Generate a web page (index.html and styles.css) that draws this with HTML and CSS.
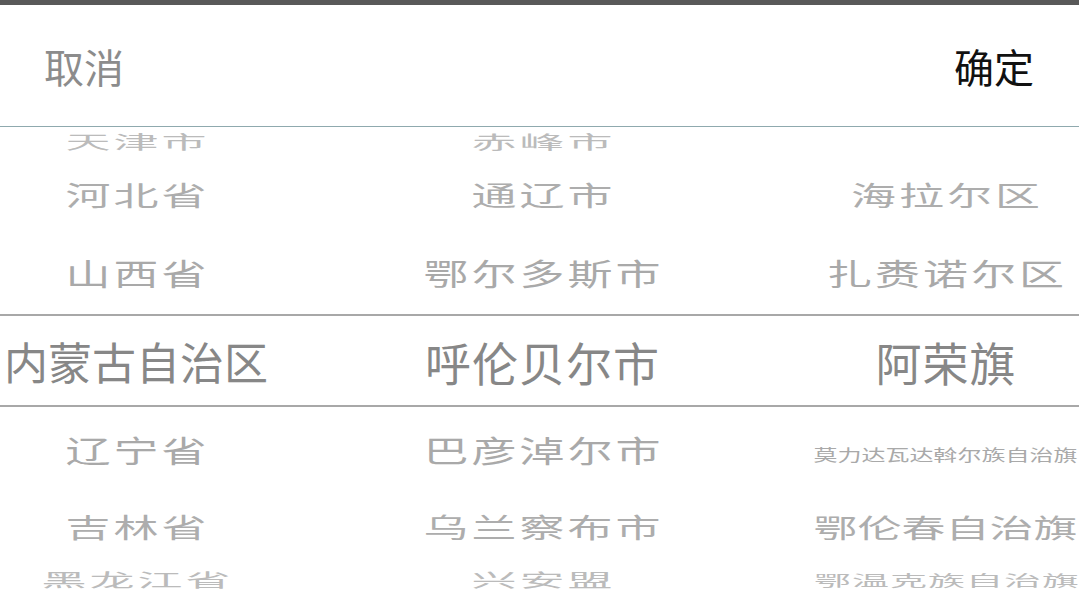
FILE: index.html
```html
<!DOCTYPE html>
<html lang="zh-CN">
  <head>
    <meta charset="UTF-8" />
    <meta name="viewport" content="width=device-width, initial-scale=1.0" />
    <title>选择地区</title>
    <link rel="stylesheet" href="styles.css">
  </head>
  <body>
    <div class="status-bar"></div>

    <div class="picker-header">
      <span class="btn-cancel">取消</span>
      <span class="btn-ok">确定</span>
    </div>

    <div class="picker">
      <div class="wheel">
        <div class="item far"><span>天津市</span></div>
        <div class="item mid"><span>河北省</span></div>
        <div class="item near"><span>山西省</span></div>
        <div class="item current"><span class="tight">内蒙古自治区</span></div>
        <div class="item near"><span>辽宁省</span></div>
        <div class="item mid"><span>吉林省</span></div>
        <div class="item far"><span>黑龙江省</span></div>
      </div>

      <div class="wheel">
        <div class="item far"><span>赤峰市</span></div>
        <div class="item mid"><span>通辽市</span></div>
        <div class="item near"><span>鄂尔多斯市</span></div>
        <div class="item current"><span>呼伦贝尔市</span></div>
        <div class="item near"><span>巴彦淖尔市</span></div>
        <div class="item mid"><span>乌兰察布市</span></div>
        <div class="item far"><span>兴安盟</span></div>
      </div>

      <div class="wheel">
        <div class="item far"></div>
        <div class="item mid"><span>海拉尔区</span></div>
        <div class="item near"><span>扎赉诺尔区</span></div>
        <div class="item current"><span>阿荣旗</span></div>
        <div class="item near"><span class="long">莫力达瓦达斡尔族自治旗</span></div>
        <div class="item mid"><span class="tight">鄂伦春自治旗</span></div>
        <div class="item far"><span class="longer">鄂温克族自治旗</span></div>
      </div>
    </div>
  </body>
</html>
```

FILE: styles.css
```css
* {
  margin: 0;
  padding: 0;
  box-sizing: border-box;
}
body {
  font-family: "Noto Sans CJK SC", "Noto Sans", sans-serif;
  background-color: #fff;
  width: 1079px;
  height: 592px;
  overflow: hidden;
}

.status-bar {
  height: 5px;
  background-color: #595959;
}

/* top buttons */
.picker-header {
  height: 122px;
  display: flex;
  justify-content: space-between;
  align-items: center;
  padding: 0 45px 0 44px;
  border-bottom: 1px solid #8fa9ae;
  font-size: 40px;
}

.btn-cancel {
  color: #8c8c8c;
}

.btn-ok {
  color: #111;
}

/* wheels */
.picker {
  height: 465px;
  display: grid;
  grid-template-columns: 272px 540px 267px;
  overflow: hidden;
}

.wheel {
  margin-top: -3px;
  min-width: 0;
}

.item {
  display: flex;
  justify-content: center;
  align-items: center;
  white-space: nowrap;
  font-size: 45px;
  line-height: 1;
}

.item span {
  display: inline-block;
  letter-spacing: 3px;
  padding-left: 3px;
}

.item.far {
  height: 35px;
  color: #bbb;
}
.item.far span {
  transform: scaleY(0.4);
}

.item.mid {
  height: 71px;
  color: #adadad;
}
.item.mid span {
  transform: scaleY(0.6);
}

.item.near {
  height: 84px;
  color: #a9a9a9;
}
.item.near span {
  transform: scaleY(0.66);
}

.item.current {
  height: 93px;
  color: #878787;
  font-size: 46px;
  border-top: 2px solid #a8a8a8;
  border-bottom: 2px solid #a8a8a8;
}
.item.current span {
  letter-spacing: 1px;
  padding-left: 1px;
}

.item span.tight {
  font-size: 44px;
  letter-spacing: 0;
  padding-left: 0;
}

.item span.long {
  font-size: 24px;
  letter-spacing: 0;
  padding-left: 0;
  margin-top: 10px;
}

.item span.longer {
  font-size: 37px;
  letter-spacing: 1px;
}
```
